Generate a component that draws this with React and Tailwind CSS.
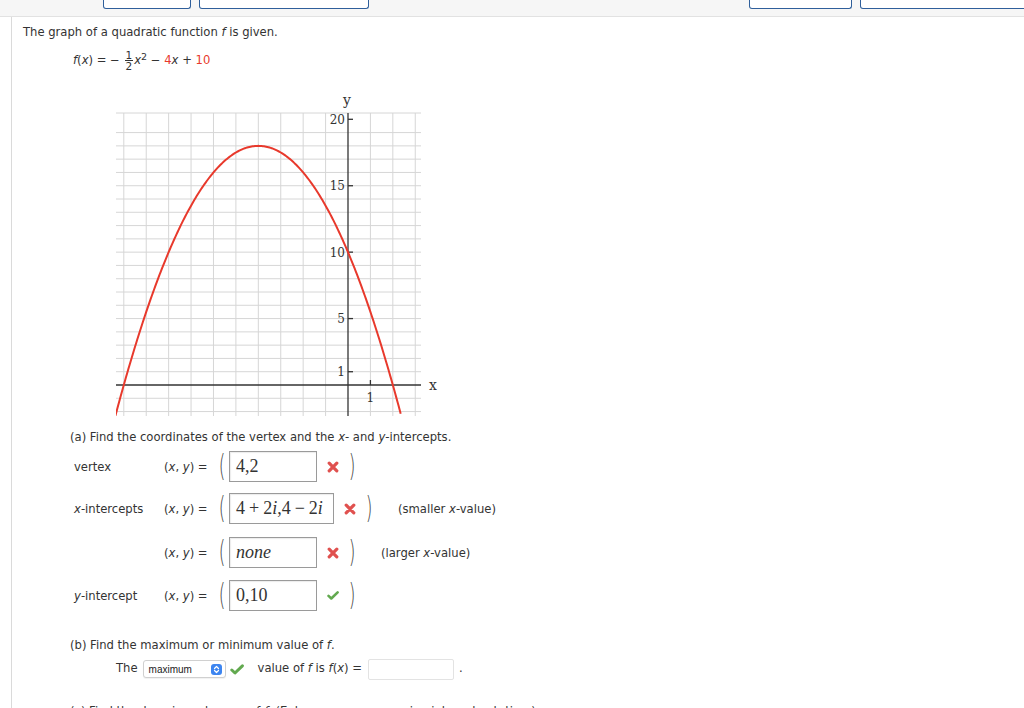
import React from "react";

function Graph() {
  const X = (x) => 248 + 22.42 * x;
  const Y = (y) => 297 - 13.285 * y;
  const left = 16, right = 321, top = 25, bottom = 328;
  const vlines = [];
  for (let i = -10; i <= 3; i++) if (i !== 0) vlines.push(i);
  const hlines = [];
  for (let j = -2; j <= 19; j++) if (j !== 0) hlines.push(j);
  const pts = [];
  for (let x = -10.4; x <= 2.4; x += 0.05) {
    const y = -0.5 * x * x - 4 * x + 10;
    pts.push(`${X(x).toFixed(2)},${Y(y).toFixed(2)}`);
  }
  return (
    <svg width="340" height="332" viewBox="0 0 340 332" className="block">
      <defs>
        <clipPath id="gclip">
          <rect x={left} y={top} width={right - left} height={bottom - top} />
        </clipPath>
      </defs>
      <g stroke="#d6d6d6" strokeWidth="1">
        {vlines.map((i) => (
          <line key={"v" + i} x1={X(i)} x2={X(i)} y1={top} y2={bottom} />
        ))}
        {hlines.map((j) => (
          <line key={"h" + j} x1={left} x2={right} y1={Y(j)} y2={Y(j)} />
        ))}
        <line x1={left} x2={right} y1={top} y2={top} />
      </g>
      <g stroke="#333" strokeWidth="1.3">
        <line x1={left} x2={right} y1={Y(0)} y2={Y(0)} />
        <line x1={X(0)} x2={X(0)} y1={top} y2={bottom} />
        {[1, 5, 10, 15, 20].map((t) => (
          <line key={"t" + t} x1={X(0)} x2={X(0) + 5} y1={Y(t)} y2={Y(t)} />
        ))}
        <line x1={X(1)} x2={X(1)} y1={Y(0)} y2={Y(0) - 5} />
      </g>
      <polyline
        points={pts.join(" ")}
        fill="none"
        stroke="#e8392c"
        strokeWidth="2"
        clipPath="url(#gclip)"
      />
      <g fill="#333" fontFamily="'DejaVu Serif', 'Liberation Serif', serif" fontSize="12">
        {[20, 15, 10, 5, 1].map((t) => (
          <text key={"l" + t} x={X(0) - 3} y={Y(t) + 4.5} textAnchor="end">
            {t}
          </text>
        ))}
        <text x={X(1)} y={Y(0) + 17} textAnchor="middle">1</text>
        <text x={333} y={Y(0) + 5} fontSize="14" textAnchor="middle">x</text>
        <text x={X(0) - 1} y={17} fontSize="14" textAnchor="middle">y</text>
      </g>
    </svg>
  );
}

function Cross() {
  return (
    <svg width="12" height="12" viewBox="0 0 12 12" className="block">
      <path d="M2.2 2.2 L9.8 9.8 M9.8 2.2 L2.2 9.8" stroke="#e0514f" strokeWidth="3.2" strokeLinecap="round" />
    </svg>
  );
}

function Check() {
  return (
    <svg width="14" height="11" viewBox="0 0 14 11" className="block">
      <path d="M1.8 6 L5 9 L12.4 1.8" fill="none" stroke="#62a94f" strokeWidth="3" strokeLinecap="round" strokeLinejoin="round" />
    </svg>
  );
}

function Paren({ children }) {
  return (
    <span className="inline-block font-['DejaVu_Sans'] font-extralight text-[31px] leading-none text-[#444] scale-x-[0.55]">
      {children}
    </span>
  );
}

function Row({ label, boxW, content, icon, note, noteGap, className }) {
  return (
    <div className={"flex items-center h-[31px] " + (className || "")}>
      <div className="w-[90px] mt-[2px]">{label}</div>
      <div className="w-[52px] mt-[2px] whitespace-nowrap">
        (<i>x</i>, <i>y</i>) =
      </div>
      <div className="w-[13px] flex justify-center -mt-[2px]">
        <Paren>(</Paren>
      </div>
      <div
        style={{ width: boxW }}
        className="h-[31px] border border-[#9a9a9a] bg-white flex items-center pl-[6px] font-['Liberation_Serif'] text-[18px] text-[#333] shadow-[inset_1px_1px_1px_rgba(0,0,0,0.08)]"
      >
        {content}
      </div>
      <div className="ml-[10px] w-[12px] flex justify-center">{icon}</div>
      <div className="ml-[9px] w-[8px] flex justify-center -mt-[2px]">
        <Paren>)</Paren>
      </div>
      {note && (
        <div className="mt-[2px]" style={{ marginLeft: noteGap }}>
          {note}
        </div>
      )}
    </div>
  );
}

export default function App() {
  return (
    <div className="w-[1024px] h-[708px] overflow-hidden bg-white font-['DejaVu_Sans',sans-serif] text-[11.6px] text-[#333]">
      {/* top bar */}
      <div className="h-[17px] bg-[#f6f6f6] border-b border-[#e2e2e2] flex items-start overflow-hidden">
        <div className="ml-[103px] flex gap-[8px]">
          <div className="w-[88px] h-[9px] bg-white border-[1.5px] border-t-0 border-[#2f5f9b] rounded-b-[3px]" />
          <div className="w-[170px] h-[9px] bg-white border-[1.5px] border-t-0 border-[#2f5f9b] rounded-b-[3px]" />
        </div>
        <div className="ml-auto flex gap-[8px] -mr-[20px]">
          <div className="w-[103px] h-[9px] bg-white border-[1.5px] border-t-0 border-[#2f5f9b] rounded-b-[3px]" />
          <div className="w-[184px] h-[9px] bg-white border-[1.5px] border-t-0 border-[#2f5f9b] rounded-b-[3px]" />
        </div>
      </div>

      {/* main */}
      <div className="ml-[11px] border-l border-[#dadada] h-[691px] pl-[11px] pt-[8px]">
        <div className="leading-[15px] h-[15px]">
          The graph of a quadratic function <i>f</i> is given.
        </div>

        <div className="mt-[8px] h-[26px] flex items-center ml-[50px] whitespace-pre">
          <span>
            <i>f</i>(<i>x</i>) = −{" "}
          </span>
          <span className="inline-flex flex-col items-center text-[10.5px] leading-[10px] mx-[1px] -mt-[1px]">
            <span className="px-[1px]">1</span>
            <span className="w-[8px] h-px bg-[#333]" />
            <span className="px-[1px]">2</span>
          </span>
          <span>
            <i>x</i>
          </span>
          <span className="text-[9.5px] -mt-[8px]">2</span>
          <span> − </span>
          <span className="text-[#e8392c]">4</span>
          <i>x</i>
          <span> + </span>
          <span className="text-[#e8392c]">10</span>
        </div>

        <div className="mt-[14px] ml-[77px]">
          <Graph />
        </div>

        <div className="mt-[10px] ml-[47px] leading-[15px] h-[15px]">
          (a) Find the coordinates of the vertex and the <i>x</i>- and <i>y</i>-intercepts.
        </div>

        <div className="ml-[51px]">
          <Row className="mt-[6px]" label="vertex" boxW={88} content={<span>4,2</span>} icon={<Cross />} />
          <Row
            className="mt-[11px]"
            label={
              <span>
                <i>x</i>-intercepts
              </span>
            }
            boxW={105}
            content={
              <span className="whitespace-pre">
                4<span className="mx-[4px]">+</span>2<i>i</i>,4<span className="mx-[4px]">−</span>2<i>i</i>
              </span>
            }
            icon={<Cross />}
            note={
              <span>
                (smaller <i>x</i>-value)
              </span>
            }
            noteGap={25}
          />
          <Row
            className="mt-[13px]"
            label=""
            boxW={88}
            content={<i>none</i>}
            icon={<Cross />}
            note={
              <span>
                (larger <i>x</i>-value)
              </span>
            }
            noteGap={25}
          />
          <Row
            className="mt-[12px]"
            label={
              <span>
                <i>y</i>-intercept
              </span>
            }
            boxW={88}
            content={<span>0,10</span>}
            icon={<Check />}
          />
        </div>

        <div className="mt-[27px] ml-[47px] leading-[15px] h-[15px]">
          (b) Find the maximum or minimum value of <i>f</i>.
        </div>

        <div className="mt-[6px] ml-[93px] flex items-center h-[20px]">
          <span>The</span>
          <div className="ml-[5px] w-[83px] h-[18px] rounded-[3px] border border-[#d0d0d0] bg-white flex items-center pl-[5px] pr-[3px] shadow-[0_1px_1px_rgba(0,0,0,0.06)]">
            <span className="font-['Liberation_Sans'] text-[10px] text-[#222] flex-1">maximum</span>
            <span className="w-[11px] h-[11px] rounded-[3px] bg-[#3d85f0] flex flex-col items-center justify-center">
              <svg width="7" height="9" viewBox="0 0 7 9">
                <path d="M1.5 3.5 L3.5 1.5 L5.5 3.5 M1.5 5.5 L3.5 7.5 L5.5 5.5" fill="none" stroke="white" strokeWidth="1.2" strokeLinecap="round" strokeLinejoin="round" />
              </svg>
            </span>
          </div>
          <div className="ml-[4px]">
            <Check />
          </div>
          <span className="ml-[14px]">
            value of <i>f</i> is <i>f</i>(<i>x</i>) =
          </span>
          <div className="ml-[6px] w-[86px] h-[21px] border border-[#e3e3e3] bg-white rounded-[2px]" />
          <span className="ml-[5px]">.</span>
        </div>

        <div className="mt-[25px] ml-[47px] leading-[15px] h-[15px] whitespace-nowrap">
          (c) Find the domain and range of <i>f</i>. (Enter your answers using interval notation.)
        </div>
      </div>
    </div>
  );
}
